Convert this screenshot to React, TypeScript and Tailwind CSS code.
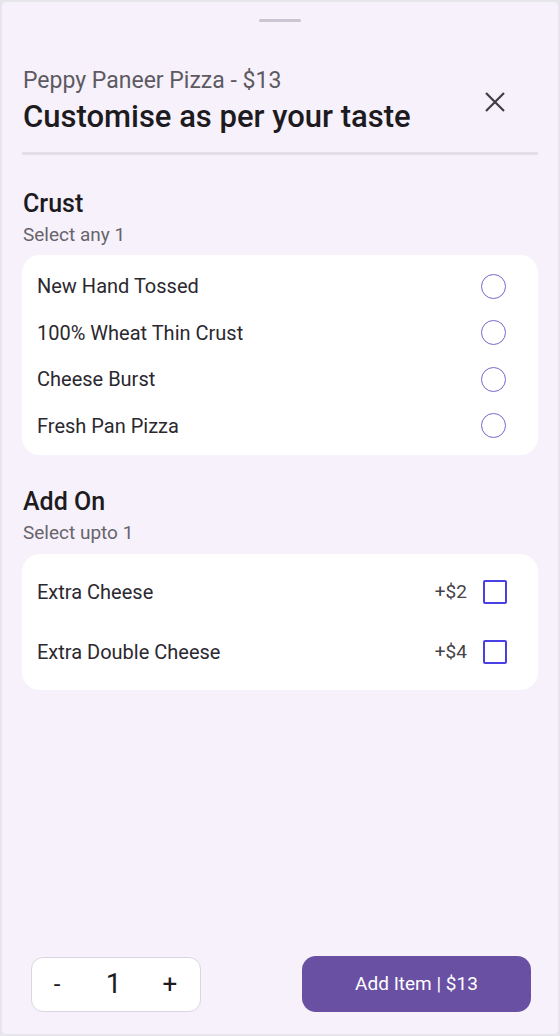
import { useState } from "react";

const crusts = ["New Hand Tossed", "100% Wheat Thin Crust", "Cheese Burst", "Fresh Pan Pizza"];

const addOns = [
  { name: "Extra Cheese", price: 2 },
  { name: "Extra Double Cheese", price: 4 },
];

export default function App() {
  const [crust, setCrust] = useState<number | null>(null);
  const [extra, setExtra] = useState<number | null>(null);
  const [qty, setQty] = useState(1);

  return (
    <div
      className="h-[1036px] w-[560px] bg-[#e7e6ea] p-[2px]"
      style={{ fontFamily: "Roboto, 'Noto Sans', sans-serif" }}
    >
      <div className="flex h-full flex-col rounded-[4px] bg-[#f6f1fb]">
        {/* Drag handle */}
        <div className="mx-auto mt-[17px] h-[3px] w-[42px] rounded-full bg-[#cbc4d3]" />

        {/* Header */}
        <div className="mt-[45px] flex items-center justify-between px-[21px]">
          <div>
            <p className="text-[23px] leading-[28px] text-[#5d5a61]">Peppy Paneer Pizza - $13</p>
            <h1 className="mt-[2px] text-[31px] leading-[40px] font-medium text-[#1d1b20]">
              Customise as per your taste
            </h1>
          </div>
          <button className="mr-[30px] text-[#3f3c44]">
            <svg width="24" height="24" viewBox="0 0 24 24" fill="none" stroke="currentColor" strokeWidth="2.2">
              <path d="M3 3L21 21M21 3L3 21" />
            </svg>
          </button>
        </div>
        <div className="mx-[20px] mt-[15px] h-[3px] bg-[#e2dfe6]" />

        {/* Crust */}
        <div className="mt-[34px] px-[20px]">
          <h2 className="pl-[1px] text-[25px] leading-[30px] font-medium text-[#1d1b20]">Crust</h2>
          <p className="mt-[3px] pl-[1px] text-[19px] leading-[26px] text-[#67646b]">Select any 1</p>
          <div className="mt-[7px] rounded-[18px] bg-white pt-2 pb-[6px]">
            {crusts.map((c, i) => (
              <div
                key={c}
                onClick={() => setCrust(i)}
                className="flex h-[46.5px] cursor-pointer items-center justify-between pl-[15px] pr-[32px]"
              >
                <span className="text-[20px] text-[#2b2830]">{c}</span>
                <span className="flex h-[25px] w-[25px] items-center justify-center rounded-full border-[1.6px] border-[#7868cc]">
                  {crust === i && <span className="h-[13px] w-[13px] rounded-full bg-[#6750a4]" />}
                </span>
              </div>
            ))}
          </div>
        </div>

        {/* Add On */}
        <div className="mt-[32px] px-[20px]">
          <h2 className="pl-[1px] text-[25px] leading-[30px] font-medium text-[#1d1b20]">Add On</h2>
          <p className="mt-[3px] pl-[1px] text-[19px] leading-[26px] text-[#67646b]">Select upto 1</p>
          <div className="mt-[8px] rounded-[18px] bg-white py-2">
            {addOns.map((a, i) => (
              <div
                key={a.name}
                onClick={() => setExtra(extra === i ? null : i)}
                className="flex h-[60px] cursor-pointer items-center justify-between pl-[15px] pr-[31px]"
              >
                <span className="text-[20px] text-[#2b2830]">{a.name}</span>
                <div className="flex items-center gap-[16px]">
                  <span className="text-[19px] text-[#45424a]">+${a.price}</span>
                  <span className="flex h-[24px] w-[24px] items-center justify-center rounded-[2px] border-[2.5px] border-[#4a3fe3]">
                    {extra === i && <span className="h-[12px] w-[12px] bg-[#4a3fe3]" />}
                  </span>
                </div>
              </div>
            ))}
          </div>
        </div>

        {/* Bottom bar */}
        <div className="mt-auto mb-[22px] flex items-center justify-between pl-[29px] pr-[27px]">
          <div className="flex h-[55px] w-[170px] items-center justify-between rounded-[12px] border border-[#dcd5e1] bg-white pl-[17px] pr-[22px] text-[#1d1b20]">
            <button className="w-[16px] text-[24px]" onClick={() => setQty(Math.max(1, qty - 1))}>
              -
            </button>
            <span className="text-[28px]">{qty}</span>
            <button className="w-[16px] text-[26px]" onClick={() => setQty(qty + 1)}>
              +
            </button>
          </div>
          <button className="h-[56px] w-[229px] rounded-[14px] bg-[#6950a3] text-[19px] text-white">
            Add Item | ${13 * qty}
          </button>
        </div>
      </div>
    </div>
  );
}
